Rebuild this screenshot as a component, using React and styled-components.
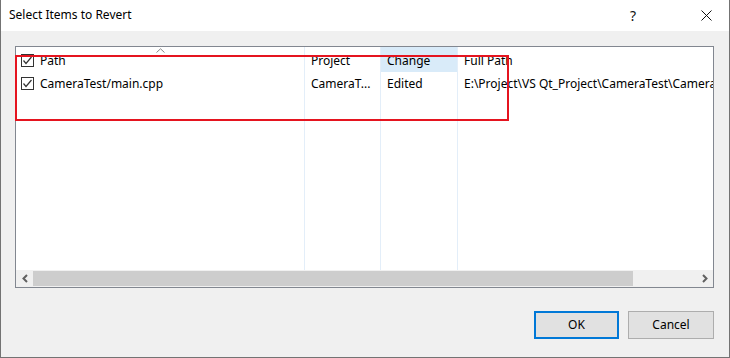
import React from "react";
import styled, { createGlobalStyle } from "styled-components";

const Global = createGlobalStyle`
  html, body { margin: 0; padding: 0; background: #f0f0f0; }
  body { font-family: "Noto Sans", "Liberation Sans", sans-serif; font-size: 12px; color: #000; }
`;

const Dialog = styled.div`
  width: 730px;
  height: 358px;
  box-sizing: border-box;
  border: 1px solid #737373;
  border-top: none;
  background: #f0f0f0;
  display: flex;
  flex-direction: column;
`;

const TitleBar = styled.div`
  height: 31px;
  background: #fff;
  display: flex;
  align-items: center;
  padding-left: 8px;
  flex-shrink: 0;
`;

const Title = styled.span`
  flex: 1;
  font-size: 12px;
  padding-bottom: 2px;
`;

const TitleButton = styled.span`
  width: ${(p) => p.w}px;
  margin-right: ${(p) => p.mr || 0}px;
  display: flex;
  justify-content: center;
  align-items: center;
  font-size: 14px;
  color: #111;
`;

const Body = styled.div`
  flex: 1;
  display: flex;
  flex-direction: column;
  padding: 15px 15px 0 14px;
`;

const ListBox = styled.div`
  position: relative;
  height: 242px;
  box-sizing: border-box;
  border: 1px solid #828790;
  background: #fff;
  display: flex;
  flex-direction: column;
`;

const Columns = styled.div`
  flex: 1;
  display: flex;
  overflow: hidden;
`;

const Column = styled.div`
  width: ${(p) => (p.w ? `${p.w}px` : "auto")};
  flex: ${(p) => (p.w ? "none" : 1)};
  box-sizing: border-box;
  border-right: ${(p) => (p.last ? "none" : "1px solid #e3eef9")};
  display: flex;
  flex-direction: column;
  overflow: hidden;
  white-space: nowrap;
`;

const Cell = styled.div`
  position: relative;
  height: ${(p) => (p.header ? 25 : 22)}px;
  display: flex;
  align-items: center;
  padding-left: ${(p) => p.pad ?? 6}px;
  gap: 6px;
  background: ${(p) => (p.hot ? "#d9ebf9" : "transparent")};
  padding-top: ${(p) => (p.header ? 1 : 0)}px;
  box-sizing: border-box;
`;

const SortArrow = styled.svg`
  position: absolute;
  left: 140px;
  top: 1px;
`;

const Box = styled.span`
  width: 13px;
  height: 13px;
  box-sizing: border-box;
  border: 1px solid #333;
  display: inline-flex;
  align-items: center;
  justify-content: center;
  background: #fff;
`;

const Scrollbar = styled.div`
  height: 17px;
  display: flex;
  background: #f0f0f0;
  flex-shrink: 0;
`;

const ArrowBtn = styled.div`
  width: 17px;
  display: flex;
  align-items: center;
  justify-content: center;
`;

const Track = styled.div`
  flex: 1;
  display: flex;
  padding: 1px 0;
`;

const Thumb = styled.div`
  width: 600px;
  background: #cdcdcd;
`;

const Highlight = styled.div`
  position: absolute;
  left: -1px;
  top: 8px;
  width: 494px;
  height: 66px;
  box-sizing: border-box;
  border: 2px solid #e5141f;
  pointer-events: none;
`;

const Footer = styled.div`
  display: flex;
  justify-content: flex-end;
  gap: 9px;
  padding-top: 23px;
`;

const Button = styled.button`
  width: ${(p) => (p.primary ? 85 : 86)}px;
  height: 28px;
  box-sizing: border-box;
  font-family: inherit;
  font-size: 12px;
  color: #000;
  background: #e1e1e1;
  border: ${(p) => (p.primary ? "2px solid #0078d7" : "1px solid #adadad")};
  padding: 0;
  padding-bottom: 1px;
`;

const Check = () => (
  <Box>
    <svg width="11" height="11" viewBox="0 0 11 11">
      <path d="M1.5 5.5 L4 8.5 L9.5 2" fill="none" stroke="#333" strokeWidth="1.2" />
    </svg>
  </Box>
);

const Chevron = ({ dir }) => (
  <svg width="8" height="9" viewBox="0 0 8 9">
    <path
      d={dir === "left" ? "M6 1 L2.5 4.5 L6 8" : "M2 1 L5.5 4.5 L2 8"}
      fill="none"
      stroke="#606060"
      strokeWidth="2"
    />
  </svg>
);

const rows = [
  { path: "CameraTest/main.cpp", project: "CameraT...", change: "Edited", full: "E:\\Project\\VS Qt_Project\\CameraTest\\CameraTest\\main.cpp" },
];

export default function App() {
  return (
    <>
      <Global />
      <Dialog>
        <TitleBar>
          <Title>Select Items to Revert</Title>
          <TitleButton w={46} mr={27}>?</TitleButton>
          <TitleButton w={46}>
            <svg width="11" height="11" viewBox="0 0 11 11">
              <path d="M0.5 0.5 L10.5 10.5 M10.5 0.5 L0.5 10.5" stroke="#111" strokeWidth="1" />
            </svg>
          </TitleButton>
        </TitleBar>
        <Body>
          <ListBox>
            <Columns>
              <Column w={289}>
                <Cell header pad={5}>
                  <SortArrow width="9" height="5" viewBox="0 0 9 5">
                    <path d="M0.5 4.5 L4.5 0.8 L8.5 4.5" fill="none" stroke="#888" strokeWidth="1" />
                  </SortArrow>
                  <Check />
                  Path
                </Cell>
                {rows.map((r) => (
                  <Cell key={r.path} pad={5}>
                    <Check />
                    {r.path}
                  </Cell>
                ))}
              </Column>
              <Column w={76}>
                <Cell header>Project</Cell>
                {rows.map((r) => (
                  <Cell key={r.path}>{r.project}</Cell>
                ))}
              </Column>
              <Column w={77}>
                <Cell header hot>Change</Cell>
                {rows.map((r) => (
                  <Cell key={r.path}>{r.change}</Cell>
                ))}
              </Column>
              <Column last>
                <Cell header>Full Path</Cell>
                {rows.map((r) => (
                  <Cell key={r.path}>{r.full}</Cell>
                ))}
              </Column>
            </Columns>
            <Scrollbar>
              <ArrowBtn>
                <Chevron dir="left" />
              </ArrowBtn>
              <Track>
                <Thumb />
              </Track>
              <ArrowBtn>
                <Chevron dir="right" />
              </ArrowBtn>
            </Scrollbar>
            <Highlight />
          </ListBox>
          <Footer>
            <Button primary>OK</Button>
            <Button>Cancel</Button>
          </Footer>
        </Body>
      </Dialog>
    </>
  );
}
